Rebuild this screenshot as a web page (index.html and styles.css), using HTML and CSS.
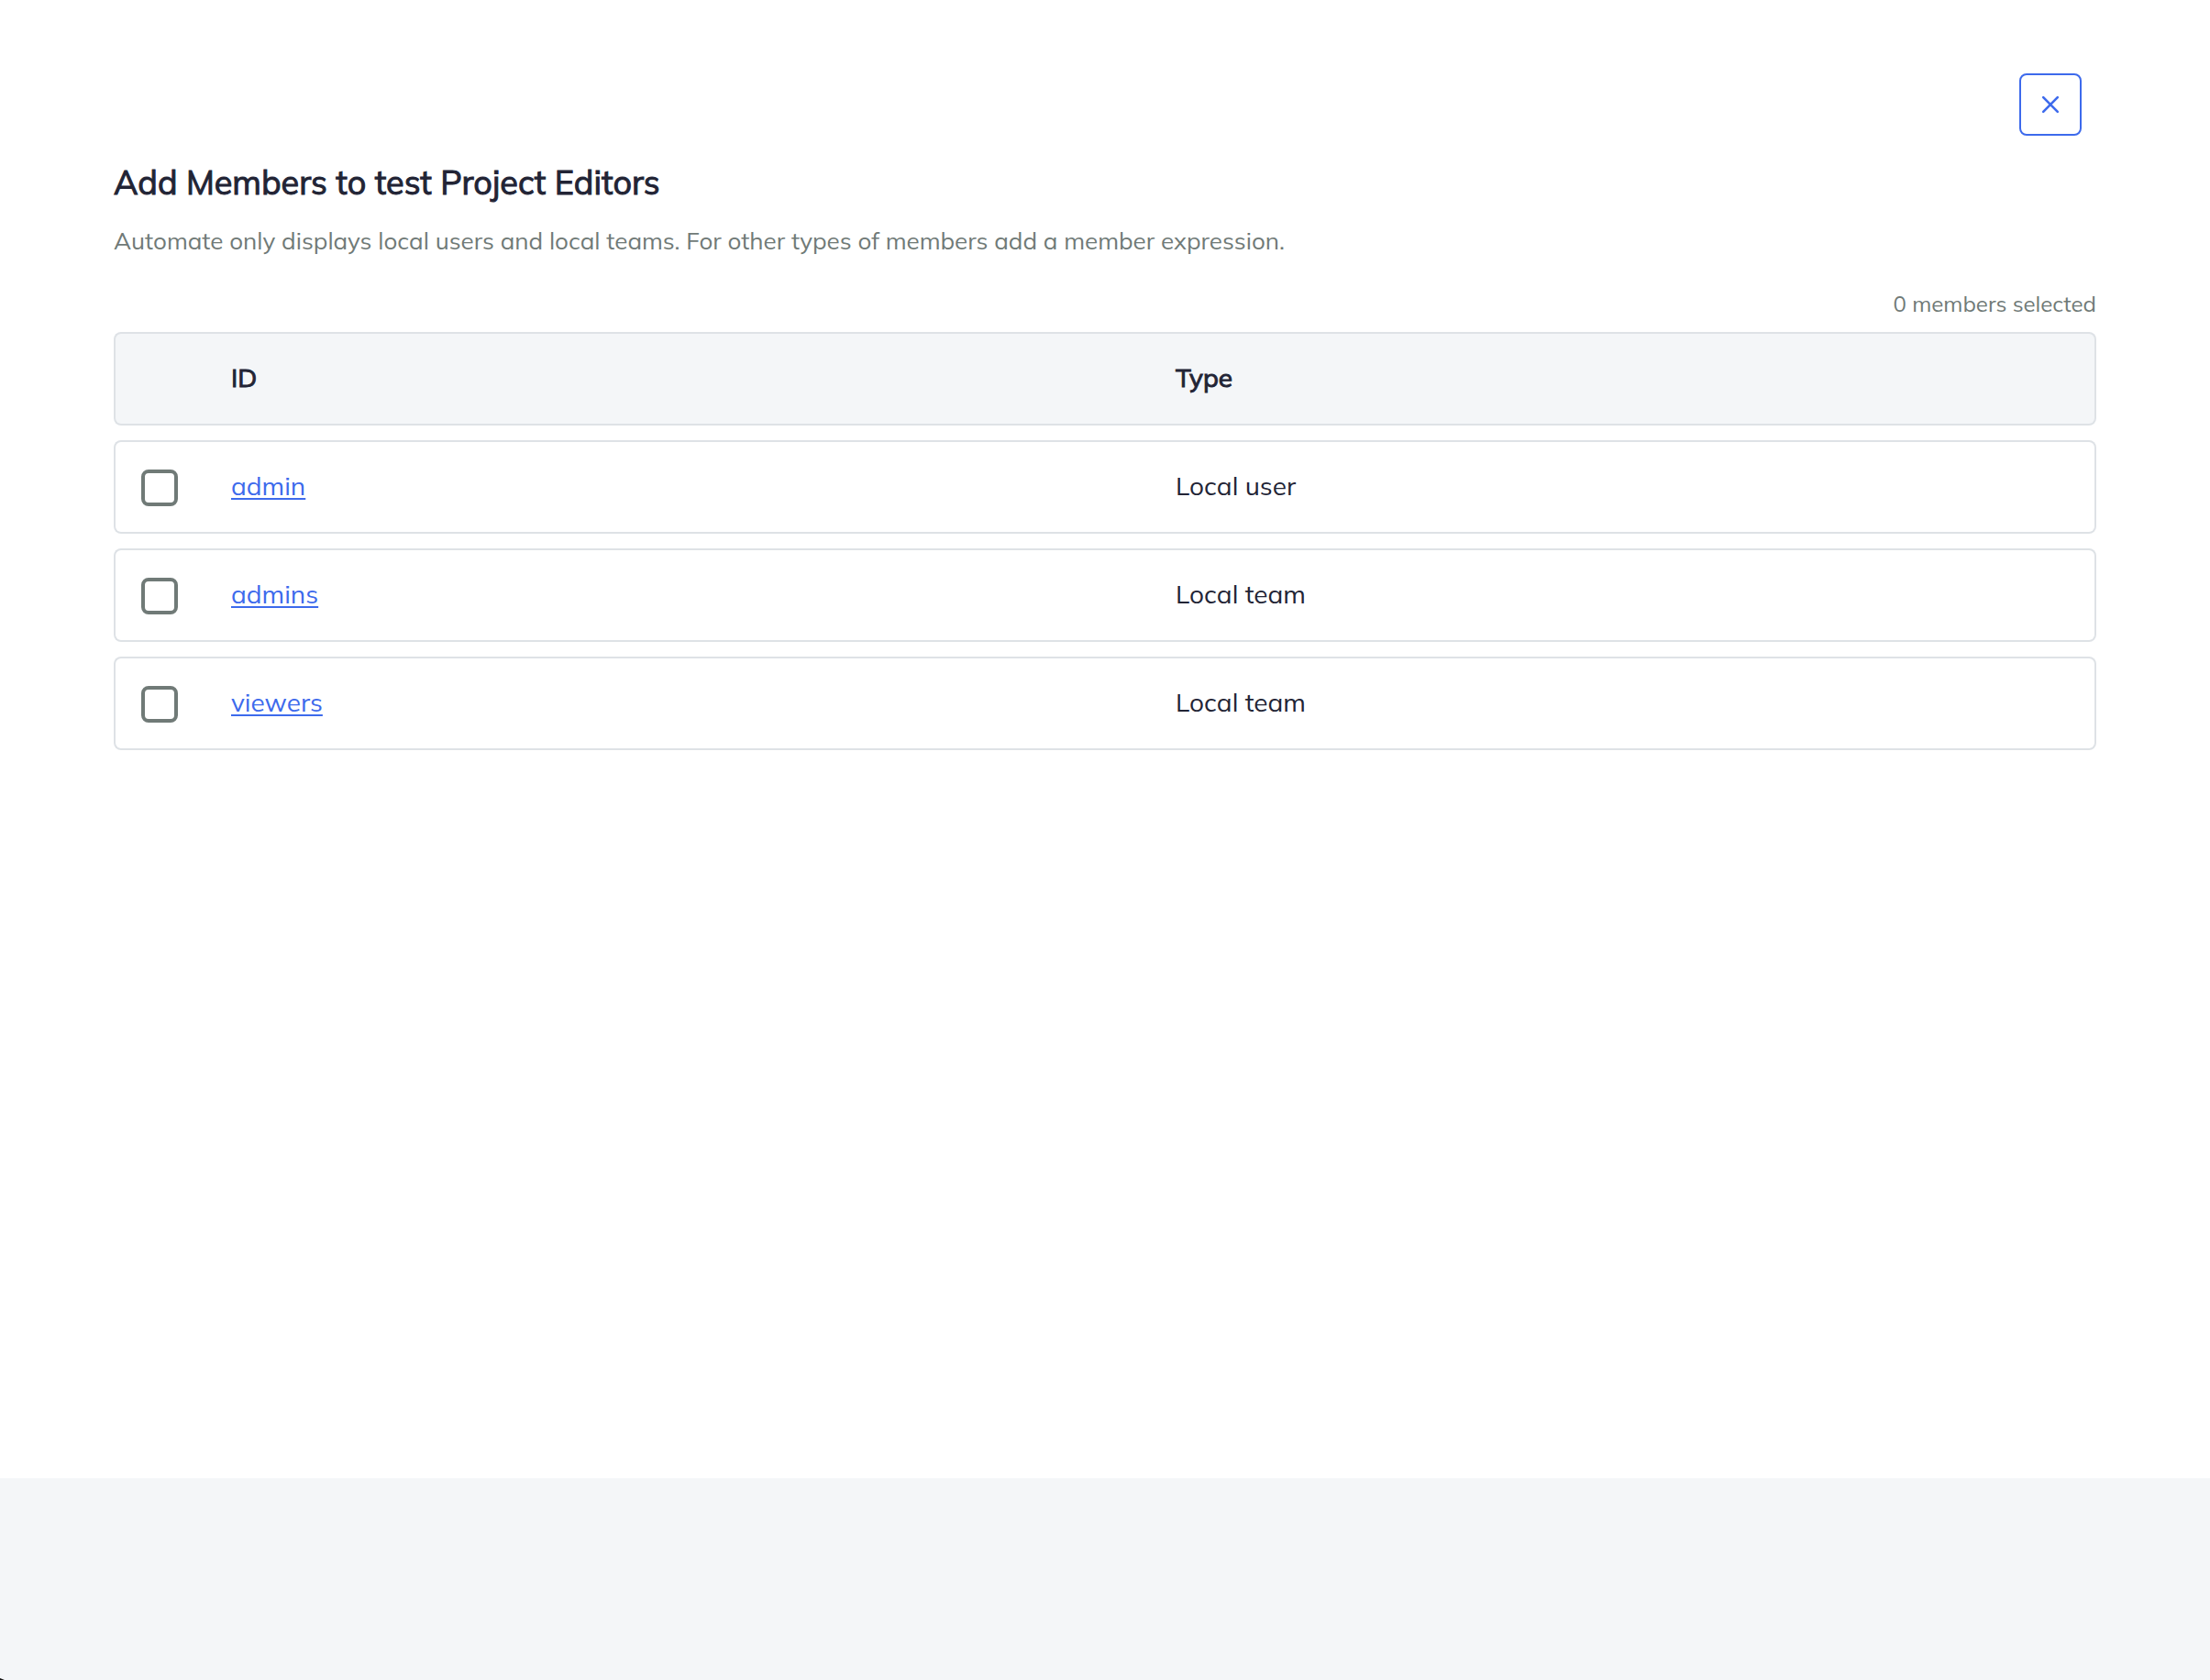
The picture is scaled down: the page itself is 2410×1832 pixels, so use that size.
FILE: index.html
```html
<!DOCTYPE html>
<html lang="en">
<head>
    <meta charset="UTF-8">
    <meta name="viewport" content="width=device-width, initial-scale=1.0">
    <title>Add Members</title>
    <link rel="stylesheet" href="styles.css">
</head>
<body>
    <main class="modal">
        <div class="close-bar">
            <button class="close-btn" type="button" aria-label="Close">
                <svg width="20" height="20" viewBox="0 0 20 20" aria-hidden="true">
                    <path d="M2.2 2.2L17.8 17.8M17.8 2.2L2.2 17.8"/>
                </svg>
            </button>
        </div>
        <h1>Add Members to test Project Editors</h1>
        <p class="description">Automate only displays local users and local teams. For other types of members add a member expression.</p>
        <p class="selected-count">0 members selected</p>
        <table class="members">
            <thead>
                <tr>
                    <th class="check-col"></th>
                    <th>ID</th>
                    <th>Type</th>
                </tr>
            </thead>
            <tbody>
                <tr>
                    <td class="check-col"><input type="checkbox" aria-labelledby="member-admin"></td>
                    <td><a id="member-admin" href="#">admin</a></td>
                    <td>Local user</td>
                </tr>
                <tr>
                    <td class="check-col"><input type="checkbox" aria-labelledby="member-admins"></td>
                    <td><a id="member-admins" href="#">admins</a></td>
                    <td>Local team</td>
                </tr>
                <tr>
                    <td class="check-col"><input type="checkbox" aria-labelledby="member-viewers"></td>
                    <td><a id="member-viewers" href="#">viewers</a></td>
                    <td>Local team</td>
                </tr>
            </tbody>
        </table>
    </main>
    <footer class="button-bar"></footer>
</body>
</html>
```
FILE: styles.css
```css
* {
    box-sizing: border-box;
}

body {
    display: flex;
    flex-direction: column;
    min-height: 100vh;
    margin: 0;
    font-family: Muli, Mulish, Lato, sans-serif;
    font-size: 28px;
    line-height: 36px;
    color: #222435;
    background-color: #fff;
}

.modal {
    flex: 1;
    padding: 80px 124px 40px;
}

.close-bar {
    display: flex;
    justify-content: flex-end;
    padding-right: 16px;
}

.close-btn {
    display: flex;
    justify-content: center;
    align-items: center;
    width: 68px;
    height: 68px;
    padding: 0;
    border: 2px solid #3d6aec;
    border-radius: 8px;
    background-color: #fff;
    cursor: pointer;
}

.close-btn path {
    fill: none;
    stroke: #3d6aec;
    stroke-width: 2.6;
    stroke-linecap: round;
}

h1, th {
    font-weight: 400;
    -webkit-text-stroke: 1px #222435;
}

h1 {
    margin: 29px 0 0;
    font-size: 36px;
    line-height: 44px;
}

p {
    margin: 0;
    color: #707a77;
}

.description {
    margin-top: 24px;
    font-size: 26px;
    line-height: 36px;
}

.selected-count {
    margin-top: 34px;
    font-size: 24px;
    line-height: 32px;
    text-align: right;
}

.members {
    width: 100%;
    margin-top: -1px;
    table-layout: fixed;
    border-collapse: separate;
    border-spacing: 0 16px;
}

th, td {
    height: 102px;
    padding: 0 26px 2px;
    border: solid #dee2e6;
    border-width: 2px 0;
    text-align: left;
    vertical-align: middle;
}

th {
    background-color: #f4f6f8;
}

.check-col {
    width: 102px;
    padding: 0 0 0 28px;
}

th:first-child, td:first-child {
    border-left-width: 2px;
    border-radius: 8px 0 0 8px;
}

th:last-child, td:last-child {
    border-right-width: 2px;
    border-radius: 0 8px 8px 0;
}

a {
    color: #3d6aec;
    text-decoration-thickness: 2px;
    text-underline-offset: 3px;
}

input[type="checkbox"] {
    appearance: none;
    display: block;
    width: 40px;
    height: 40px;
    margin: 2px 0 0;
    border: 4px solid #707a77;
    border-radius: 8px;
}

input[type="checkbox"]:checked {
    background-color: #3d6aec;
    border-color: #3d6aec;
}

.button-bar {
    position: relative;
    height: 220px;
    background-color: #f4f6f8;
}

/* dark tip of the rounded window corner */
.button-bar::after {
    content: "";
    position: absolute;
    left: 0;
    bottom: 0;
    width: 5px;
    height: 2px;
    background-color: #111;
    clip-path: polygon(0 0, 100% 100%, 0 100%);
}
```
